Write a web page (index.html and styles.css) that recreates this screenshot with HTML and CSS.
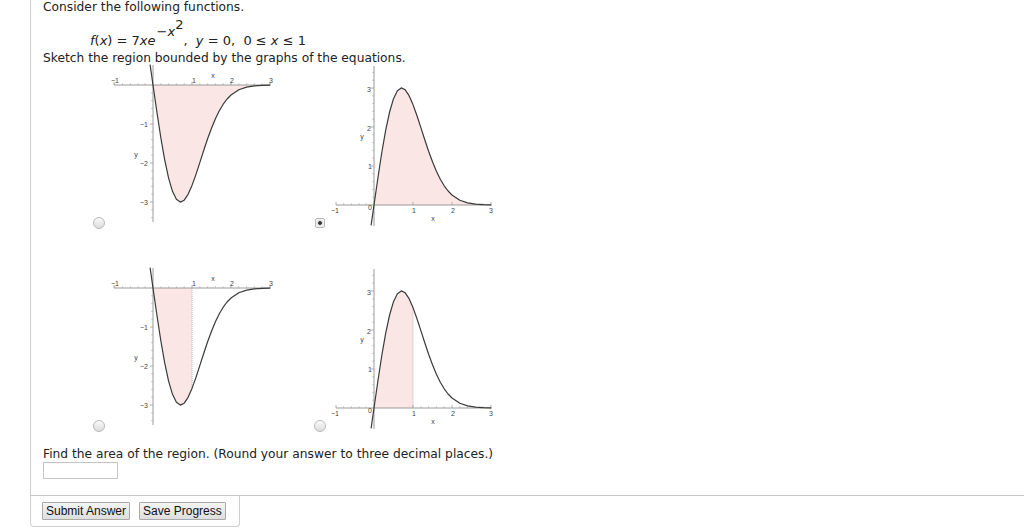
FILE: index.html
```html
<!DOCTYPE html>
<html>
<head>
<meta charset="utf-8">
<link rel="stylesheet" href="styles.css">
</head>
<body>
<div class="question">
  <div class="line first">Consider the following functions.</div>
  <div class="formula"><i>f</i>(<i>x</i>) = 7<i>xe</i><span class="sup">−<i>x</i><span class="sup2">2</span></span><span class="rest">,&nbsp; <i>y</i> = 0,&nbsp; 0 ≤ <i>x</i> ≤ 1</span></div>
  <div class="line sketch">Sketch the region bounded by the graphs of the equations.</div>

  <div class="options">
    <div class="cell">
      <span class="radio"></span>
      <svg class="graph" width="180" height="168" viewBox="0 0 180 168">
        <g class="ticks">
          <path d="M7.8 23v-2M15.6 23v-2M23.4 23v-2M31.2 23v-2M38 23v-2M53.8 23v-2M61.6 23v-2M69.4 23v-2M77.2 23v-2M92.8 23v-2M100.6 23v-2M108.4 23v-2M116.2 23v-2M131.8 23v-2M139.6 23v-2M147.4 23v-2M155.2 23v-2"/>
          <path d="M46 30.8h-2M46 38.6h-2M46 46.4h-2M46 54.2h-2M46 69.8h-2M46 77.6h-2M46 85.4h-2M46 93.2h-2M46 108.8h-2M46 116.6h-2M46 124.4h-2M46 132.2h-2M46 147.8h-2M46 155.6h-2"/>
        </g>
        <polygon class="fill" points="46,23 49.9,50 53.8,75.5 57.7,97.9 61.6,116.1 65.5,129.3 69.4,137.3 73.3,140.1 77.2,138.2 81.1,132.3 85,123.4 88.9,112.6 92.8,100.6 96.7,88.5 100.6,76.8 104.5,66.2 108.4,56.8 112.3,48.8 116.2,42.2 120.1,37 124,33 131.8,27.8 139.6,25.1 147.4,23.8 155.2,23.3 163,23.1 163,23"/>
        <line class="axis" x1="7" y1="23" x2="164" y2="23"/>
        <line class="axis" x1="46" y1="3" x2="46" y2="160"/>
        <g class="major">
          <path d="M7 23v-3M85 23v-3M124 23v-3M163 23v-3M46 62h-3M46 101h-3M46 140h-3"/>
        </g>
        <polyline class="curve" points="43.1,2.6 46,23 49.9,50 53.8,75.5 57.7,97.9 61.6,116.1 65.5,129.3 69.4,137.3 73.3,140.1 77.2,138.2 81.1,132.3 85,123.4 88.9,112.6 92.8,100.6 96.7,88.5 100.6,76.8 104.5,66.2 108.4,56.8 112.3,48.8 116.2,42.2 120.1,37 124,33 131.8,27.8 139.6,25.1 147.4,23.8 155.2,23.3 163,23.1"/>
        <g class="lbl">
          <text x="8" y="21" text-anchor="middle">−1</text>
          <text x="87" y="21" text-anchor="middle">1</text>
          <text x="106" y="16" text-anchor="middle">x</text>
          <text x="125" y="21" text-anchor="middle">2</text>
          <text x="164" y="21" text-anchor="middle">3</text>
          <text x="41" y="65" text-anchor="end">−1</text>
          <text x="41" y="104" text-anchor="end">−2</text>
          <text x="41" y="143" text-anchor="end">−3</text>
          <text x="29" y="95" text-anchor="middle">y</text>
        </g>
      </svg>
    </div>
    <div class="cell">
      <span class="radio checked"></span>
      <svg class="graph" width="180" height="168" viewBox="0 0 180 168">
        <g class="ticks">
          <path d="M15.6 143v-2M23.4 143v-2M31.2 143v-2M38 143v-2M53.8 143v-2M61.6 143v-2M69.4 143v-2M77.2 143v-2M92.8 143v-2M100.6 143v-2M108.4 143v-2M116.2 143v-2M131.8 143v-2M139.6 143v-2M147.4 143v-2M155.2 143v-2"/>
          <path d="M46 135.2h-2M46 127.4h-2M46 119.6h-2M46 111.8h-2M46 96.2h-2M46 88.4h-2M46 80.6h-2M46 72.8h-2M46 57.2h-2M46 49.4h-2M46 41.6h-2M46 33.8h-2M46 18.2h-2M46 10.4h-2"/>
        </g>
        <polygon class="fill" points="46,143 49.9,116 53.8,90.5 57.7,68.2 61.6,50 65.5,36.7 69.4,28.7 73.3,25.9 77.2,27.8 81.1,33.7 85,42.6 88.9,53.5 92.8,65.4 96.7,77.5 100.6,89.2 104.5,99.8 108.4,109.2 112.3,117.2 116.2,123.8 120.1,129 124,133 131.8,138.3 139.6,140.9 147.4,142.2 155.2,142.7 163,142.9 163,143"/>
        <line class="axis" x1="8" y1="143" x2="164" y2="143"/>
        <line class="axis" x1="46" y1="4" x2="46" y2="164"/>
        <g class="major">
          <path d="M8 143v-3M85 143v-3M124 143v-3M163 143v-3M46 104h-3M46 65h-3M46 26h-3"/>
        </g>
        <polyline class="curve" points="43.1,163.4 46,143 49.9,116 53.8,90.5 57.7,68.2 61.6,50 65.5,36.7 69.4,28.7 73.3,25.9 77.2,27.8 81.1,33.7 85,42.6 88.9,53.5 92.8,65.4 96.7,77.5 100.6,89.2 104.5,99.8 108.4,109.2 112.3,117.2 116.2,123.8 120.1,129 124,133 131.8,138.3 139.6,140.9 147.4,142.2 155.2,142.7 163,142.9"/>
        <g class="lbl">
          <text x="7" y="151" text-anchor="middle">−1</text>
          <text x="42" y="148" text-anchor="middle">0</text>
          <text x="86" y="151" text-anchor="middle">1</text>
          <text x="125" y="151" text-anchor="middle">2</text>
          <text x="163" y="151" text-anchor="middle">3</text>
          <text x="105" y="159" text-anchor="middle">x</text>
          <text x="43" y="30" text-anchor="end">3</text>
          <text x="43" y="69" text-anchor="end">2</text>
          <text x="44" y="107" text-anchor="end">1</text>
          <text x="34" y="77" text-anchor="middle">y</text>
        </g>
      </svg>
    </div>
    <div class="cell">
      <span class="radio"></span>
      <svg class="graph" width="180" height="168" viewBox="0 0 180 168">
        <g class="ticks">
          <path d="M7.8 23v-2M15.6 23v-2M23.4 23v-2M31.2 23v-2M38 23v-2M53.8 23v-2M61.6 23v-2M69.4 23v-2M77.2 23v-2M92.8 23v-2M100.6 23v-2M108.4 23v-2M116.2 23v-2M131.8 23v-2M139.6 23v-2M147.4 23v-2M155.2 23v-2"/>
          <path d="M46 30.8h-2M46 38.6h-2M46 46.4h-2M46 54.2h-2M46 69.8h-2M46 77.6h-2M46 85.4h-2M46 93.2h-2M46 108.8h-2M46 116.6h-2M46 124.4h-2M46 132.2h-2M46 147.8h-2M46 155.6h-2"/>
        </g>
        <polygon class="fill" points="46,23 49.9,50 53.8,75.5 57.7,97.9 61.6,116.1 65.5,129.3 69.4,137.3 73.3,140.1 77.2,138.2 81.1,132.3 85,123.4 85,23"/>
        <line class="dotted" x1="85" y1="23" x2="85" y2="123.4"/>
        <line class="axis" x1="7" y1="23" x2="164" y2="23"/>
        <line class="axis" x1="46" y1="3" x2="46" y2="160"/>
        <g class="major">
          <path d="M7 23v-3M85 23v-3M124 23v-3M163 23v-3M46 62h-3M46 101h-3M46 140h-3"/>
        </g>
        <polyline class="curve" points="43.1,2.6 46,23 49.9,50 53.8,75.5 57.7,97.9 61.6,116.1 65.5,129.3 69.4,137.3 73.3,140.1 77.2,138.2 81.1,132.3 85,123.4 88.9,112.6 92.8,100.6 96.7,88.5 100.6,76.8 104.5,66.2 108.4,56.8 112.3,48.8 116.2,42.2 120.1,37 124,33 131.8,27.8 139.6,25.1 147.4,23.8 155.2,23.3 163,23.1"/>
        <g class="lbl">
          <text x="8" y="21" text-anchor="middle">−1</text>
          <text x="87" y="21" text-anchor="middle">1</text>
          <text x="106" y="16" text-anchor="middle">x</text>
          <text x="125" y="21" text-anchor="middle">2</text>
          <text x="164" y="21" text-anchor="middle">3</text>
          <text x="41" y="65" text-anchor="end">−1</text>
          <text x="41" y="104" text-anchor="end">−2</text>
          <text x="41" y="143" text-anchor="end">−3</text>
          <text x="29" y="95" text-anchor="middle">y</text>
        </g>
      </svg>
    </div>
    <div class="cell">
      <span class="radio"></span>
      <svg class="graph" width="180" height="168" viewBox="0 0 180 168">
        <g class="ticks">
          <path d="M15.6 143v-2M23.4 143v-2M31.2 143v-2M38 143v-2M53.8 143v-2M61.6 143v-2M69.4 143v-2M77.2 143v-2M92.8 143v-2M100.6 143v-2M108.4 143v-2M116.2 143v-2M131.8 143v-2M139.6 143v-2M147.4 143v-2M155.2 143v-2"/>
          <path d="M46 135.2h-2M46 127.4h-2M46 119.6h-2M46 111.8h-2M46 96.2h-2M46 88.4h-2M46 80.6h-2M46 72.8h-2M46 57.2h-2M46 49.4h-2M46 41.6h-2M46 33.8h-2M46 18.2h-2M46 10.4h-2"/>
        </g>
        <polygon class="fill" points="46,143 49.9,116 53.8,90.5 57.7,68.2 61.6,50 65.5,36.7 69.4,28.7 73.3,25.9 77.2,27.8 81.1,33.7 85,42.6 85,143"/>
        <line class="dotted" x1="85" y1="42.6" x2="85" y2="143"/>
        <line class="axis" x1="8" y1="143" x2="164" y2="143"/>
        <line class="axis" x1="46" y1="4" x2="46" y2="164"/>
        <g class="major">
          <path d="M8 143v-3M85 143v-3M124 143v-3M163 143v-3M46 104h-3M46 65h-3M46 26h-3"/>
        </g>
        <polyline class="curve" points="43.1,163.4 46,143 49.9,116 53.8,90.5 57.7,68.2 61.6,50 65.5,36.7 69.4,28.7 73.3,25.9 77.2,27.8 81.1,33.7 85,42.6 88.9,53.5 92.8,65.4 96.7,77.5 100.6,89.2 104.5,99.8 108.4,109.2 112.3,117.2 116.2,123.8 120.1,129 124,133 131.8,138.3 139.6,140.9 147.4,142.2 155.2,142.7 163,142.9"/>
        <g class="lbl">
          <text x="7" y="151" text-anchor="middle">−1</text>
          <text x="42" y="148" text-anchor="middle">0</text>
          <text x="86" y="151" text-anchor="middle">1</text>
          <text x="125" y="151" text-anchor="middle">2</text>
          <text x="163" y="151" text-anchor="middle">3</text>
          <text x="105" y="159" text-anchor="middle">x</text>
          <text x="43" y="30" text-anchor="end">3</text>
          <text x="43" y="69" text-anchor="end">2</text>
          <text x="44" y="107" text-anchor="end">1</text>
          <text x="34" y="77" text-anchor="middle">y</text>
        </g>
      </svg>
    </div>
  </div>

  <div class="line find">Find the area of the region. (Round your answer to three decimal places.)</div>
  <div class="answer"><span class="input"></span></div>
</div>
<div class="buttons">
  <button class="btn">Submit Answer</button>
  <button class="btn">Save Progress</button>
</div>
</body>
</html>
```
FILE: styles.css
```css
html, body {
  margin: 0;
  padding: 0;
  background: #ffffff;
}
body {
  font-family: "DejaVu Sans", Verdana, sans-serif;
  font-size: 12.25px;
  color: #222;
}
.question {
  margin-left: 30px;
  border-left: 1px solid #cfcfcf;
  border-bottom: 1px solid #c8c8c8;
  padding-left: 12px;
  height: 496px;
  box-sizing: border-box;
}
.line {
  height: 14px;
  line-height: 14px;
  white-space: nowrap;
}
.sketch {
  margin-top: 3px;
}
.formula {
  height: 34px;
  line-height: 14px;
  padding-top: 20px;
  box-sizing: border-box;
  margin-left: 47px;
  white-space: nowrap;
  font-size: 13px;
}
.sup {
  position: relative;
  top: -9px;
  margin-left: 1px;
}
.sup2 {
  position: relative;
  top: -7px;
}
.options {
  margin-left: 50px;
  margin-top: -3px;
  display: grid;
  grid-template-columns: 221px 221px;
  row-gap: 35px;
  height: 371px;
}
.cell {
  display: flex;
  align-items: flex-end;
  height: 168px;
}
.radio {
  width: 10px;
  height: 10px;
  border-radius: 50%;
  border: 1px solid #b8b8b8;
  background: linear-gradient(#fbfbfb, #dcdcdc);
  margin-right: 2px;
  margin-bottom: 1px;
  box-sizing: content-box;
  flex: none;
}
.radio.checked {
  width: 8px;
  height: 8px;
  margin-left: 1px;
  margin-right: 3px;
  margin-bottom: 2px;
  border-radius: 2px;
  background: radial-gradient(circle, #333 0, #333 1.5px, #dedede 2.2px, #f4f4f4 4px);
}
.graph {
  display: block;
  flex: none;
}
.fill {
  fill: #fbe6e6;
  stroke: none;
}
.axis {
  stroke: #9a9a9a;
  stroke-width: 1;
}
.ticks path {
  stroke: #c4c4c4;
  stroke-width: 0.8;
  fill: none;
}
.major path {
  stroke: #9a9a9a;
  stroke-width: 0.8;
  fill: none;
}
.curve {
  fill: none;
  stroke: #3a3a3a;
  stroke-width: 1.2;
  stroke-linejoin: round;
}
.dotted {
  stroke: #b9a0a0;
  stroke-width: 0.8;
  stroke-dasharray: 1 1;
}
.lbl text {
  font-family: "Liberation Sans", Arial, sans-serif;
  font-size: 7px;
  fill: #444;
}
.find {
  margin-top: 14px;
}
.answer {
  margin-top: 1px;
}
.input {
  display: block;
  width: 73px;
  height: 15px;
  border: 1px solid #c4c4c4;
  background: #fff;
}
.buttons {
  margin-left: 30px;
  width: 210px;
  height: 31px;
  box-sizing: border-box;
  border: 1px solid #cfcfcf;
  border-top: none;
  border-radius: 0 0 4px 4px;
  padding: 6px 0 0 11px;
  display: flex;
  gap: 9px;
  align-items: flex-start;
}
.btn {
  font-family: "Liberation Sans", Arial, sans-serif;
  font-size: 12px;
  color: #111;
  height: 18px;
  padding: 0 3px;
  margin: 0;
  border: 1px solid #a9a9a9;
  border-radius: 1px;
  background: linear-gradient(#f4f4f4, #dedede);
  line-height: 16px;
}
```
